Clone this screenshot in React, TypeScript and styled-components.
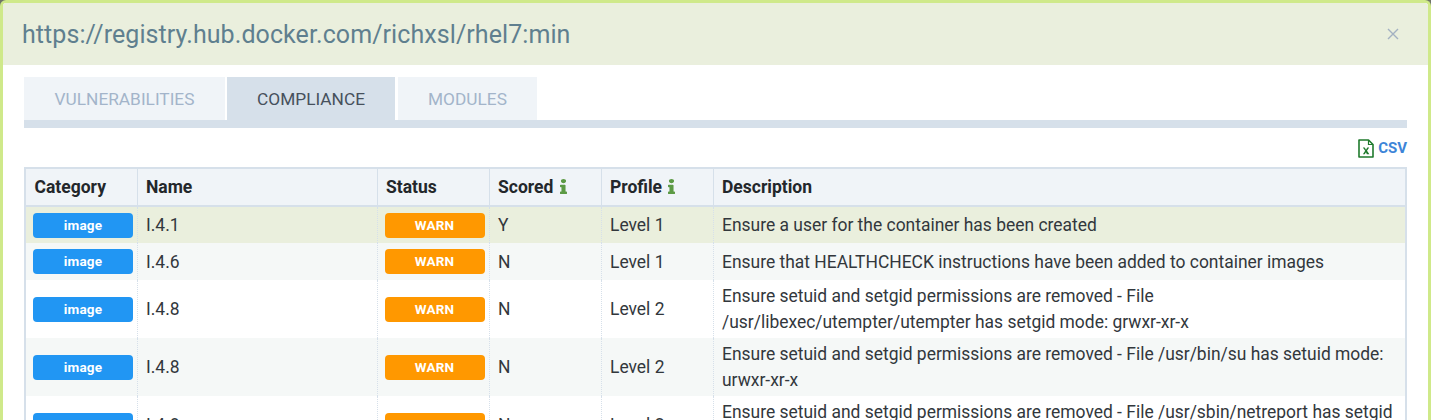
import { createGlobalStyle, styled } from 'styled-components'
import { FaInfo } from 'react-icons/fa'

const rows = [
  { category: 'image', name: 'I.4.1', status: 'WARN', scored: 'Y', profile: 'Level 1', description: 'Ensure a user for the container has been created' },
  { category: 'image', name: 'I.4.6', status: 'WARN', scored: 'N', profile: 'Level 1', description: 'Ensure that HEALTHCHECK instructions have been added to container images' },
  { category: 'image', name: 'I.4.8', status: 'WARN', scored: 'N', profile: 'Level 2', description: 'Ensure setuid and setgid permissions are removed - File /usr/libexec/utempter/utempter has setgid mode: grwxr-xr-x' },
  { category: 'image', name: 'I.4.8', status: 'WARN', scored: 'N', profile: 'Level 2', description: 'Ensure setuid and setgid permissions are removed - File /usr/bin/su has setuid mode: urwxr-xr-x' },
  { category: 'image', name: 'I.4.8', status: 'WARN', scored: 'N', profile: 'Level 2', description: 'Ensure setuid and setgid permissions are removed - File /usr/sbin/netreport has setgid mode: grwxr-xr-x' }
]

const tabs = [
  { label: 'VULNERABILITIES', width: 201 },
  { label: 'COMPLIANCE', width: 168, active: true },
  { label: 'MODULES', width: 139 }
]

const ExcelIcon = () => (
  <svg width="16" height="19" viewBox="0 0 16 19" fill="none">
    <path d="M1 1h9.5L15 5.5V18H1z" stroke="#1f7a2c" strokeWidth="1.6" strokeLinejoin="round" />
    <path d="M10.5 1v4.5H15" stroke="#1f7a2c" strokeWidth="1.2" />
    <path d="M4.8 8.5h1.9l1.3 2.2 1.3-2.2h1.9l-2.2 3.2 2.4 3.5H8.8L8 13.2l-1.3 2H4.9l2.3-3.5z" fill="#1f7a2c" />
  </svg>
)

export default function App() {
  return (
    <>
      <GlobalStyle />
      <Modal>
        <Header>
          <Title>https://registry.hub.docker.com/richxsl/rhel7:min</Title>
          <CloseIcon width="12" height="12" viewBox="0 0 12 12">
            <path d="M1 1l10 10M11 1L1 11" stroke="#a3b1c2" strokeWidth="1.4" fill="none" />
          </CloseIcon>
        </Header>
        <Body>
          <TabList>
            {tabs.map(tab => (
              <Tab key={tab.label} $active={tab.active} $width={tab.width}>
                {tab.label}
              </Tab>
            ))}
          </TabList>
          <TabBar />
          <Toolbar>
            <CsvLink>
              <ExcelIcon />
              CSV
            </CsvLink>
          </Toolbar>
          <Table>
            <colgroup>
              <col style={{ width: 112 }} />
              <col style={{ width: 240 }} />
              <col style={{ width: 112 }} />
              <col style={{ width: 112 }} />
              <col style={{ width: 112 }} />
              <col />
            </colgroup>
            <thead>
              <tr>
                <HeadCell>Category</HeadCell>
                <HeadCell>Name</HeadCell>
                <HeadCell>Status</HeadCell>
                <HeadCell>Scored <InfoIcon preserveAspectRatio="none" /></HeadCell>
                <HeadCell>Profile <InfoIcon preserveAspectRatio="none" /></HeadCell>
                <HeadCell>Description</HeadCell>
              </tr>
            </thead>
            <tbody>
              {rows.map((row, index) => (
                <Row key={index} $selected={index === 0}>
                  <BadgeCell><Badge $color="#2196f3">{row.category}</Badge></BadgeCell>
                  <Cell>{row.name}</Cell>
                  <BadgeCell><Badge $color="#ff9800">{row.status}</Badge></BadgeCell>
                  <Cell>{row.scored}</Cell>
                  <Cell>{row.profile}</Cell>
                  <Cell>{row.description}</Cell>
                </Row>
              ))}
            </tbody>
          </Table>
        </Body>
      </Modal>
    </>
  )
}

const GlobalStyle = createGlobalStyle`
  html, body {
    margin: 0;
    height: 420px;
    overflow: hidden;
    background: #6f7468;
  }
  body {
    font-family: Roboto, "Liberation Sans", sans-serif;
  }
`
const Modal = styled.div`
  height: 420px;
  box-sizing: border-box;
  border: 3px solid #cfe98a;
  border-bottom: none;
  border-radius: 6px 6px 0 0;
  background: #fff;
  overflow: hidden;
`
const Header = styled.div`
  height: 62px;
  background: #eaefdd;
  display: flex;
  align-items: center;
  justify-content: space-between;
  padding: 0 29px 0 19px;
`
const Title = styled.div`
  font-size: 25px;
  color: #5f7f8f;
  letter-spacing: 0.08px;
`
const CloseIcon = styled.svg`
  display: block;
`
const Body = styled.div`
  padding: 12px 21px 0;
`
const TabList = styled.div`
  display: flex;
  gap: 3px;
  height: 43px;
`
const Tab = styled.div<{ $active?: boolean; $width: number }>`
  width: ${p => p.$width}px;
  margin-right: ${p => (p.$width === 201 ? -1 : 0)}px;
  display: flex;
  align-items: center;
  justify-content: center;
  font-size: 17.3px;
  background: ${p => (p.$active ? '#d6e0ea' : '#f0f4f8')};
  color: ${p => (p.$active ? '#46505c' : '#a3b4ca')};
`
const TabBar = styled.div`
  height: 8px;
  background: #d6e0ea;
`
const Toolbar = styled.div`
  height: 40px;
  display: flex;
  justify-content: flex-end;
  align-items: center;
`
const CsvLink = styled.a`
  display: flex;
  align-items: center;
  gap: 4px;
  font-size: 15px;
  font-weight: 700;
  color: #3d85d8;
`
const Table = styled.table`
  width: 1383px;
  margin-top: -1px;
  table-layout: fixed;
  border-collapse: collapse;
  border: 2px solid #d6e0ea;
  border-bottom: none;
`
const HeadCell = styled.th`
  height: 38px;
  box-sizing: border-box;
  padding: 0 8px 1px 8.5px;
  text-align: left;
  font-size: 17.5px;
  font-weight: 700;
  color: #23272b;
  background: #f0f4f8;
  border: 1px solid #d6e0ea;
  border-bottom-width: 2px;
`
const InfoIcon = styled(FaInfo)`
  width: 7px;
  height: 15px;
  margin-left: 2px;
  vertical-align: -1px;
  color: #5c9a45;
`
const Row = styled.tr<{ $selected?: boolean }>`
  background: #fff;
  &:nth-child(even) {
    background: #f5f8f7;
  }
  ${p => p.$selected && '&& { background: #eaefdd; }'}
`
const Cell = styled.td`
  height: 37px;
  box-sizing: border-box;
  padding: 3px 8px 3px 8.5px;
  font-size: 17.45px;
  line-height: 26px;
  color: #32373c;
  border-left: 1px dotted #d6e0ea;
  border-right: 1px dotted #d6e0ea;
`
const BadgeCell = styled(Cell)`
  padding: 0 8px 0 7px;
`
const Badge = styled.div<{ $color: string }>`
  height: 25px;
  width: 100px;
  box-sizing: border-box;
  padding-bottom: 1px;
  border-radius: 4px;
  background: ${p => p.$color};
  color: #fff;
  font-size: 13.5px;
  font-weight: 700;
  letter-spacing: 0.2px;
  display: flex;
  align-items: center;
  justify-content: center;
`
